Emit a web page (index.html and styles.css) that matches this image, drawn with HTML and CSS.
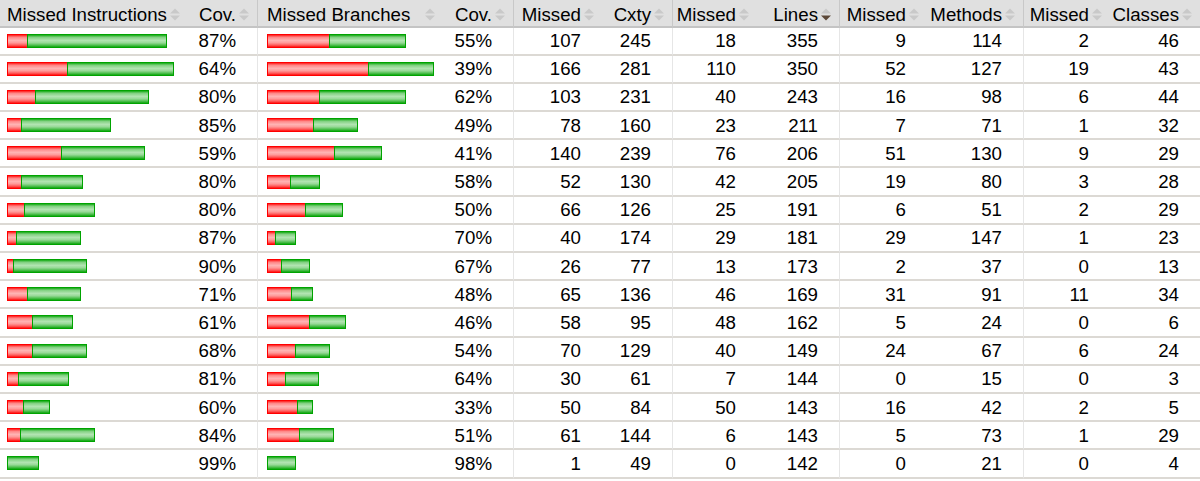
FILE: index.html
```html
<!DOCTYPE html>
<html>
<head>
<meta charset="utf-8">
<link rel="stylesheet" href="styles.css">
</head>
<body>
<table class="coverage">
<thead>
<tr>
<th class="bar w1"><div class="hd">Missed Instructions<svg class="sort" viewBox="0 0 10 13"><polygon class="up" points="0,5.5 5,0.5 10,5.5"/><polygon class="dn" points="0,7.5 10,7.5 5,12.5"/></svg></div></th>
<th class="ctr2 w2"><div class="hd">Cov.<svg class="sort" viewBox="0 0 10 13"><polygon class="up" points="0,5.5 5,0.5 10,5.5"/><polygon class="dn" points="0,7.5 10,7.5 5,12.5"/></svg></div></th>
<th class="bar b2 w3"><div class="hd">Missed Branches<svg class="sort" viewBox="0 0 10 13"><polygon class="up" points="0,5.5 5,0.5 10,5.5"/><polygon class="dn" points="0,7.5 10,7.5 5,12.5"/></svg></div></th>
<th class="ctr2 w4"><div class="hd">Cov.<svg class="sort" viewBox="0 0 10 13"><polygon class="up" points="0,5.5 5,0.5 10,5.5"/><polygon class="dn" points="0,7.5 10,7.5 5,12.5"/></svg></div></th>
<th class="ctr1 w5"><div class="hd">Missed<svg class="sort" viewBox="0 0 10 13"><polygon class="up" points="0,5.5 5,0.5 10,5.5"/><polygon class="dn" points="0,7.5 10,7.5 5,12.5"/></svg></div></th>
<th class="ctr2 w6"><div class="hd">Cxty<svg class="sort" viewBox="0 0 10 13"><polygon class="up" points="0,5.5 5,0.5 10,5.5"/><polygon class="dn" points="0,7.5 10,7.5 5,12.5"/></svg></div></th>
<th class="ctr1 w7"><div class="hd">Missed<svg class="sort" viewBox="0 0 10 13"><polygon class="up" points="0,5.5 5,0.5 10,5.5"/><polygon class="dn" points="0,7.5 10,7.5 5,12.5"/></svg></div></th>
<th class="ctr2 w8"><div class="hd">Lines<svg class="sort active" viewBox="0 0 10 13"><polygon class="up" points="0,5.5 5,0.5 10,5.5"/><polygon class="dn" points="0,7.5 10,7.5 5,12.5"/></svg></div></th>
<th class="ctr1 w9"><div class="hd">Missed<svg class="sort" viewBox="0 0 10 13"><polygon class="up" points="0,5.5 5,0.5 10,5.5"/><polygon class="dn" points="0,7.5 10,7.5 5,12.5"/></svg></div></th>
<th class="ctr2 w10"><div class="hd">Methods<svg class="sort" viewBox="0 0 10 13"><polygon class="up" points="0,5.5 5,0.5 10,5.5"/><polygon class="dn" points="0,7.5 10,7.5 5,12.5"/></svg></div></th>
<th class="ctr1 w11"><div class="hd">Missed<svg class="sort" viewBox="0 0 10 13"><polygon class="up" points="0,5.5 5,0.5 10,5.5"/><polygon class="dn" points="0,7.5 10,7.5 5,12.5"/></svg></div></th>
<th class="ctr2 w12"><div class="hd">Classes<svg class="sort" viewBox="0 0 10 13"><polygon class="up" points="0,5.5 5,0.5 10,5.5"/><polygon class="dn" points="0,7.5 10,7.5 5,12.5"/></svg></div></th>
</tr>
</thead>
<tbody>
<tr><td class="bar"><div class="bars"><span class="red" style="width:20px"></span><span class="green" style="width:140px"></span></div></td><td class="ctr2">87%</td><td class="bar b2"><div class="bars"><span class="red" style="width:62px"></span><span class="green" style="width:77px"></span></div></td><td class="ctr2">55%</td><td class="ctr1">107</td><td class="ctr2">245</td><td class="ctr1">18</td><td class="ctr2">355</td><td class="ctr1">9</td><td class="ctr2">114</td><td class="ctr1">2</td><td class="ctr2">46</td></tr>
<tr><td class="bar"><div class="bars"><span class="red" style="width:60px"></span><span class="green" style="width:107px"></span></div></td><td class="ctr2">64%</td><td class="bar b2"><div class="bars"><span class="red" style="width:101px"></span><span class="green" style="width:66px"></span></div></td><td class="ctr2">39%</td><td class="ctr1">166</td><td class="ctr2">281</td><td class="ctr1">110</td><td class="ctr2">350</td><td class="ctr1">52</td><td class="ctr2">127</td><td class="ctr1">19</td><td class="ctr2">43</td></tr>
<tr><td class="bar"><div class="bars"><span class="red" style="width:28px"></span><span class="green" style="width:114px"></span></div></td><td class="ctr2">80%</td><td class="bar b2"><div class="bars"><span class="red" style="width:52px"></span><span class="green" style="width:87px"></span></div></td><td class="ctr2">62%</td><td class="ctr1">103</td><td class="ctr2">231</td><td class="ctr1">40</td><td class="ctr2">243</td><td class="ctr1">16</td><td class="ctr2">98</td><td class="ctr1">6</td><td class="ctr2">44</td></tr>
<tr><td class="bar"><div class="bars"><span class="red" style="width:14px"></span><span class="green" style="width:90px"></span></div></td><td class="ctr2">85%</td><td class="bar b2"><div class="bars"><span class="red" style="width:46px"></span><span class="green" style="width:45px"></span></div></td><td class="ctr2">49%</td><td class="ctr1">78</td><td class="ctr2">160</td><td class="ctr1">23</td><td class="ctr2">211</td><td class="ctr1">7</td><td class="ctr2">71</td><td class="ctr1">1</td><td class="ctr2">32</td></tr>
<tr><td class="bar"><div class="bars"><span class="red" style="width:54px"></span><span class="green" style="width:84px"></span></div></td><td class="ctr2">59%</td><td class="bar b2"><div class="bars"><span class="red" style="width:67px"></span><span class="green" style="width:48px"></span></div></td><td class="ctr2">41%</td><td class="ctr1">140</td><td class="ctr2">239</td><td class="ctr1">76</td><td class="ctr2">206</td><td class="ctr1">51</td><td class="ctr2">130</td><td class="ctr1">9</td><td class="ctr2">29</td></tr>
<tr><td class="bar"><div class="bars"><span class="red" style="width:14px"></span><span class="green" style="width:62px"></span></div></td><td class="ctr2">80%</td><td class="bar b2"><div class="bars"><span class="red" style="width:23px"></span><span class="green" style="width:30px"></span></div></td><td class="ctr2">58%</td><td class="ctr1">52</td><td class="ctr2">130</td><td class="ctr1">42</td><td class="ctr2">205</td><td class="ctr1">19</td><td class="ctr2">80</td><td class="ctr1">3</td><td class="ctr2">28</td></tr>
<tr><td class="bar"><div class="bars"><span class="red" style="width:17px"></span><span class="green" style="width:71px"></span></div></td><td class="ctr2">80%</td><td class="bar b2"><div class="bars"><span class="red" style="width:38px"></span><span class="green" style="width:38px"></span></div></td><td class="ctr2">50%</td><td class="ctr1">66</td><td class="ctr2">126</td><td class="ctr1">25</td><td class="ctr2">191</td><td class="ctr1">6</td><td class="ctr2">51</td><td class="ctr1">2</td><td class="ctr2">29</td></tr>
<tr><td class="bar"><div class="bars"><span class="red" style="width:9px"></span><span class="green" style="width:65px"></span></div></td><td class="ctr2">87%</td><td class="bar b2"><div class="bars"><span class="red" style="width:8px"></span><span class="green" style="width:21px"></span></div></td><td class="ctr2">70%</td><td class="ctr1">40</td><td class="ctr2">174</td><td class="ctr1">29</td><td class="ctr2">181</td><td class="ctr1">29</td><td class="ctr2">147</td><td class="ctr1">1</td><td class="ctr2">23</td></tr>
<tr><td class="bar"><div class="bars"><span class="red" style="width:6px"></span><span class="green" style="width:74px"></span></div></td><td class="ctr2">90%</td><td class="bar b2"><div class="bars"><span class="red" style="width:14px"></span><span class="green" style="width:29px"></span></div></td><td class="ctr2">67%</td><td class="ctr1">26</td><td class="ctr2">77</td><td class="ctr1">13</td><td class="ctr2">173</td><td class="ctr1">2</td><td class="ctr2">37</td><td class="ctr1">0</td><td class="ctr2">13</td></tr>
<tr><td class="bar"><div class="bars"><span class="red" style="width:20px"></span><span class="green" style="width:54px"></span></div></td><td class="ctr2">71%</td><td class="bar b2"><div class="bars"><span class="red" style="width:24px"></span><span class="green" style="width:22px"></span></div></td><td class="ctr2">48%</td><td class="ctr1">65</td><td class="ctr2">136</td><td class="ctr1">46</td><td class="ctr2">169</td><td class="ctr1">31</td><td class="ctr2">91</td><td class="ctr1">11</td><td class="ctr2">34</td></tr>
<tr><td class="bar"><div class="bars"><span class="red" style="width:25px"></span><span class="green" style="width:41px"></span></div></td><td class="ctr2">61%</td><td class="bar b2"><div class="bars"><span class="red" style="width:42px"></span><span class="green" style="width:37px"></span></div></td><td class="ctr2">46%</td><td class="ctr1">58</td><td class="ctr2">95</td><td class="ctr1">48</td><td class="ctr2">162</td><td class="ctr1">5</td><td class="ctr2">24</td><td class="ctr1">0</td><td class="ctr2">6</td></tr>
<tr><td class="bar"><div class="bars"><span class="red" style="width:25px"></span><span class="green" style="width:55px"></span></div></td><td class="ctr2">68%</td><td class="bar b2"><div class="bars"><span class="red" style="width:28px"></span><span class="green" style="width:35px"></span></div></td><td class="ctr2">54%</td><td class="ctr1">70</td><td class="ctr2">129</td><td class="ctr1">40</td><td class="ctr2">149</td><td class="ctr1">24</td><td class="ctr2">67</td><td class="ctr1">6</td><td class="ctr2">24</td></tr>
<tr><td class="bar"><div class="bars"><span class="red" style="width:11px"></span><span class="green" style="width:51px"></span></div></td><td class="ctr2">81%</td><td class="bar b2"><div class="bars"><span class="red" style="width:18px"></span><span class="green" style="width:34px"></span></div></td><td class="ctr2">64%</td><td class="ctr1">30</td><td class="ctr2">61</td><td class="ctr1">7</td><td class="ctr2">144</td><td class="ctr1">0</td><td class="ctr2">15</td><td class="ctr1">0</td><td class="ctr2">3</td></tr>
<tr><td class="bar"><div class="bars"><span class="red" style="width:16px"></span><span class="green" style="width:27px"></span></div></td><td class="ctr2">60%</td><td class="bar b2"><div class="bars"><span class="red" style="width:30px"></span><span class="green" style="width:16px"></span></div></td><td class="ctr2">33%</td><td class="ctr1">50</td><td class="ctr2">84</td><td class="ctr1">50</td><td class="ctr2">143</td><td class="ctr1">16</td><td class="ctr2">42</td><td class="ctr1">2</td><td class="ctr2">5</td></tr>
<tr><td class="bar"><div class="bars"><span class="red" style="width:13px"></span><span class="green" style="width:75px"></span></div></td><td class="ctr2">84%</td><td class="bar b2"><div class="bars"><span class="red" style="width:32px"></span><span class="green" style="width:35px"></span></div></td><td class="ctr2">51%</td><td class="ctr1">61</td><td class="ctr2">144</td><td class="ctr1">6</td><td class="ctr2">143</td><td class="ctr1">5</td><td class="ctr2">73</td><td class="ctr1">1</td><td class="ctr2">29</td></tr>
<tr><td class="bar"><div class="bars"><span class="green" style="width:32px"></span></div></td><td class="ctr2">99%</td><td class="bar b2"><div class="bars"><span class="green" style="width:29px"></span></div></td><td class="ctr2">98%</td><td class="ctr1">1</td><td class="ctr2">49</td><td class="ctr1">0</td><td class="ctr2">142</td><td class="ctr1">0</td><td class="ctr2">21</td><td class="ctr1">0</td><td class="ctr2">4</td></tr>
</tbody>
</table>
</body>
</html>
```
FILE: styles.css
```css
html, body {
  margin: 0;
  padding: 0;
  background: #ffffff;
}
body {
  font-family: "Liberation Sans", Arial, Helvetica, sans-serif;
  font-size: 18.7px;
  color: #000;
}
.coverage {
  border-collapse: separate;
  border-spacing: 0;
  table-layout: fixed;
  width: 1200px;
}
.coverage th,
.coverage td {
  box-sizing: border-box;
  white-space: nowrap;
  font-weight: normal;
  padding: 0;
}
.coverage thead th {
  background: #e0e0e0;
  height: 27.5px;
  border-bottom: 2px solid #c4c4c4;
  padding: 4px 8px 0 0;
  vertical-align: middle;
}
.coverage thead th.bar { padding-left: 7px; }
.coverage thead th.b2 { padding-left: 9px; border-left: 1px solid #c8c8c8; }
.coverage thead th.ctr1 { border-left: 1px solid #c8c8c8; }
.hd {
  display: flex;
  align-items: center;
  justify-content: flex-end;
  gap: 3px;
  line-height: 21px;
}
.bar .hd { justify-content: space-between; }
.sort { width: 10px; height: 13px; flex: none; }
.sort polygon { fill: #c9c9c9; }
.sort.active .dn { fill: #5c4838; }

.w1 { width: 187px; }
.w2 { width: 70px; }
.w3 { width: 186px; }
.w4 { width: 70px; }
.w5 { width: 89px; }
.w6 { width: 70px; }
.w7 { width: 85px; }
.w8 { width: 82px; }
.w9 { width: 88px; }
.w10 { width: 96px; }
.w11 { width: 87px; }
.w12 { width: 90px; }

.coverage tbody td {
  height: 28.2px;
  border-bottom: 2px solid #dcd9d4;
  vertical-align: middle;
  line-height: 21px;
}
.coverage tbody td.bar { padding-left: 7px; }
.coverage tbody td.b2 { padding-left: 9px; border-left: 1px solid #e6e6e6; }
.coverage tbody td.ctr1 { text-align: right; padding-right: 21px; border-left: 1px solid #e6e6e6; }
.coverage tbody td.ctr2 { text-align: right; padding-right: 21px; }

.bars { display: flex; height: 14px; }
.red, .green {
  display: block;
  height: 14px;
  box-sizing: border-box;
  flex: none;
}
.red {
  border: 1px solid #ff0000;
  border-right: none;
  background: linear-gradient(to bottom, #ff1a1a 0%, #ff8585 18%, #ffb4b4 45%, #ff9a9a 65%, #ff5a5a 85%, #ff1010 100%);
}
.green {
  border: 1px solid #00a300;
  background: linear-gradient(to bottom, #12aa12 0%, #7fd07f 18%, #b2e4b2 45%, #97d997 65%, #4fbf4f 85%, #0fa50f 100%);
}
.red + .green { border-left: 1px solid #00a300; }
```
